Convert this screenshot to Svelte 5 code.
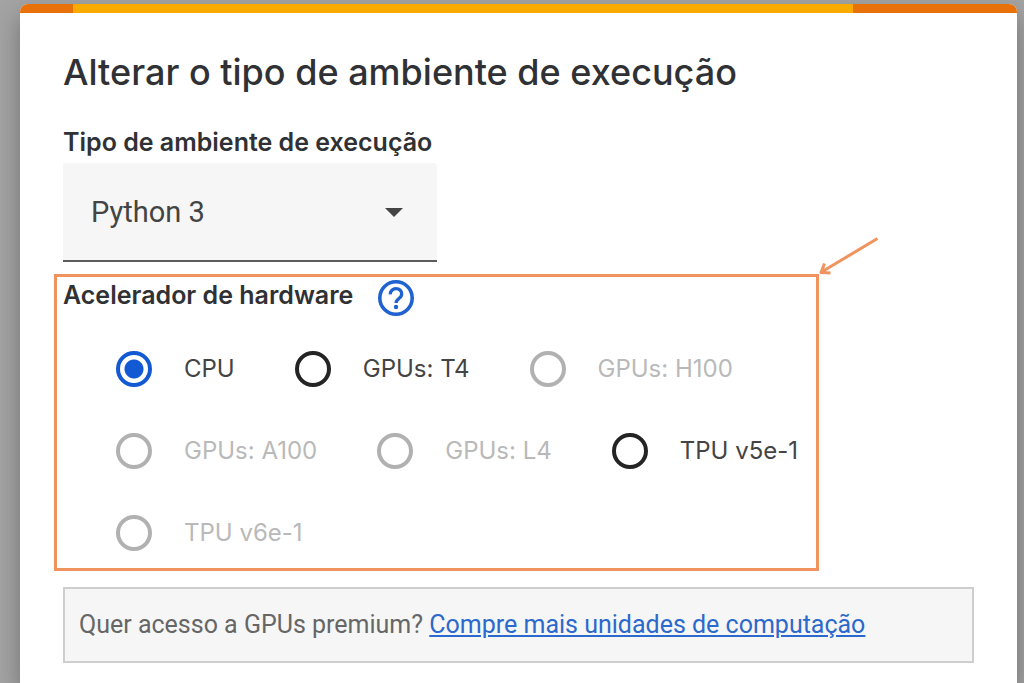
<script>
	let runtime = $state('python3');
	let accelerator = $state('cpu');

	const accelerators = [
		{ id: 'cpu', label: 'CPU' },
		{ id: 't4', label: 'GPUs: T4' },
		{ id: 'h100', label: 'GPUs: H100', disabled: true },
		{ id: 'a100', label: 'GPUs: A100', disabled: true },
		{ id: 'l4', label: 'GPUs: L4', disabled: true },
		{ id: 'v5e', label: 'TPU v5e-1' },
		{ id: 'v6e', label: 'TPU v6e-1', disabled: true }
	];
</script>

<div class="backdrop">
	<div class="dialog" role="dialog" aria-labelledby="title">
		<div class="progress"><span></span><span></span><span></span></div>
		<div class="content">
			<h1 id="title">Alterar o tipo de ambiente de execução</h1>

			<label class="heading" for="runtime">Tipo de ambiente de execução</label>
			<div class="select">
				<select id="runtime" bind:value={runtime}>
					<option value="python3">Python 3</option>
					<option value="r">R</option>
				</select>
				<svg width="18" height="10" viewBox="0 0 18 10">
					<path d="M0 0h18L9 9z" fill="#444" />
				</svg>
			</div>

			<section>
				<svg class="arrow" width="62" height="40" viewBox="0 0 62 40">
					<path
						d="M60.500 1.500L4.500 35M7.500 26.500L4 35.500L13.500 36"
						fill="none"
						stroke="#f0935f"
						stroke-width="3"
						stroke-linejoin="round"
					/>
				</svg>
				<div class="row">
					<h2 class="heading" id="accelerator">Acelerador de hardware</h2>
					<button aria-label="Ajuda">
						<svg width="36" height="36" viewBox="0 0 36 36" fill="none" stroke="#1f62d0">
							<circle cx="18" cy="18" r="16.200" stroke-width="3.600" />
							<path d="M12.300 14.300a5.700 5.300 0 1 1 9 3.900c-2 1.600-3.300 2.600-3.300 4.800" stroke-width="3.200" />
							<circle cx="18" cy="27" r="2.200" fill="#1f62d0" stroke="none" />
						</svg>
					</button>
				</div>
				<div class="options" role="radiogroup" aria-labelledby="accelerator">
					{#each accelerators as item}
						<label class:disabled={item.disabled}>
							<input
								type="radio"
								name="accelerator"
								value={item.id}
								disabled={item.disabled}
								bind:group={accelerator}
							/>
							{item.label}
						</label>
					{/each}
				</div>
			</section>

			<p>Quer acesso a GPUs premium? <a href="#compre">Compre mais unidades de computação</a></p>
		</div>
	</div>
</div>

<style>
	:global(body) {
		background: #a3a3a3;
		font-family: Inter, 'Liberation Sans', sans-serif;
		color: #303134;
	}
	.backdrop {
		box-sizing: border-box;
		min-height: 100vh;
		padding: 4px 7px 0 20px;
		display: flex;
		overflow: hidden;
	}
	.dialog {
		flex: 1;
		background: #fff;
		border-radius: 8px 8px 0 0;
		box-shadow: 0 12px 24px rgba(0, 0, 0, 0.3);
	}
	.progress {
		display: grid;
		grid-template-columns: 53fr 780fr 164fr;
		height: 9px;
		border-radius: 8px 8px 0 0;
		overflow: hidden;
		background: #e8710a;
	}
	.progress span:nth-child(2) {
		background: #f9ab00;
	}
	.content {
		padding: 36px 43px 20px;
	}
	h1 {
		margin: 0 0 32px;
		font-size: 36px;
		line-height: 46px;
		font-weight: 450;
	}
	.heading {
		display: block;
		margin: 0;
		font-size: 25px;
		line-height: 30px;
		font-weight: 600;
	}
	.select {
		display: flex;
		align-items: center;
		position: relative;
		width: 41%;
		margin-top: 6px;
	}
	select {
		appearance: none;
		width: 100%;
		height: 99px;
		padding: 0 28px;
		border: 0;
		border-bottom: 2px solid #5c5c5c;
		border-radius: 4px 4px 0 0;
		background: #f6f6f6;
		font: 29px Roboto, sans-serif;
		color: #444;
	}
	.select svg {
		position: absolute;
		right: 34px;
		pointer-events: none;
	}
	section {
		position: relative;
		box-sizing: border-box;
		width: 84%;
		margin: 12px 0 16px -9px;
		padding: 3px 6px 17px;
		border: 3px solid #f0935f;
	}
	.arrow {
		position: absolute;
		right: -63px;
		top: -40px;
	}
	.row {
		display: flex;
		gap: 25px;
	}
	button {
		padding: 0;
		border: 0;
		background: none;
		display: flex;
	}
	.options {
		display: flex;
		flex-wrap: wrap;
		gap: 46px 60px;
		padding: 35px 0 0 53px;
	}
	.options label {
		display: flex;
		align-items: center;
		gap: 32px;
		font-size: 24px;
		line-height: 36px;
		color: #444;
	}
	.options .disabled {
		color: #b9b9b9;
	}
	input {
		appearance: none;
		width: 36px;
		height: 36px;
		margin: 0;
		border: 4px solid #242424;
		border-radius: 50%;
	}
	input:checked {
		border-color: #1359d3;
		background: radial-gradient(#1359d3 9px, transparent 10px);
	}
	input:disabled {
		border-color: #b1b1b1;
	}
	p {
		margin: 0;
		padding: 20px 14px;
		border: 2px solid #cecece;
		background: #f6f6f6;
		font: 25px/32px Roboto, sans-serif;
		color: #666;
	}
	a {
		color: #2c69cc;
	}
</style>
